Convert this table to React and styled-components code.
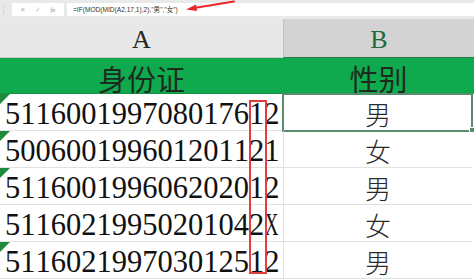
import React from "react";
import styled, { createGlobalStyle } from "styled-components";

const GlobalStyle = createGlobalStyle`
  html, body {
    margin: 0;
    padding: 0;
    background: #ffffff;
  }
  body {
    width: 474px;
    height: 279px;
    overflow: hidden;
  }
`;

const rows = [
  { id: "511600199708017612", sex: "男", flag: true },
  { id: "500600199601201121", sex: "女", flag: true },
  { id: "511600199606202012", sex: "男", flag: true },
  { id: "51160219950201042X", sex: "女", flag: false },
  { id: "511602199703012512", sex: "男", flag: true },
];

const Page = styled.div`
  width: 474px;
  height: 279px;
  display: flex;
  flex-direction: column;
  position: relative;
  overflow: hidden;
`;

const FormulaBar = styled.div`
  height: 19px;
  box-sizing: border-box;
  padding: 3px 0 0 12px;
  background: #e9e9e9;
  display: flex;
  align-items: flex-start;
  gap: 3px;
  position: relative;
`;

const Grip = styled.span`
  position: absolute;
  left: 3px;
  top: 5px;
  width: 1px;
  height: 9px;
  border-left: 1px dotted #c4c4c4;
`;

const ToolBox = styled.div`
  width: 52px;
  height: 13px;
  background: #ffffff;
  display: flex;
  align-items: center;
  justify-content: space-around;
  padding: 0 4px;
  box-sizing: border-box;
  color: #b8b8b8;
  font-family: "Liberation Sans", sans-serif;
  font-size: 7px;
`;

const FxLabel = styled.span`
  font-family: "Liberation Serif", serif;
  font-style: italic;
  color: #8a8a8a;
  font-size: 7px;
`;

const FormulaInput = styled.div`
  flex: 1;
  height: 13px;
  background: #ffffff;
  padding-left: 6px;
  font-family: "Liberation Sans", "Noto Sans CJK SC", sans-serif;
  font-size: 6.6px;
  line-height: 13px;
  color: #333333;
  white-space: nowrap;
`;

const Arrow = styled.svg`
  position: absolute;
  left: 184px;
  top: 0;
`;

const Sheet = styled.div`
  position: relative;
  display: grid;
  grid-template-columns: 283px 191px;
`;

const ColHeader = styled.div`
  height: 39px;
  box-sizing: border-box;
  background: ${(p) => (p.$active ? "#d3d3d3" : "#e8e8e8")};
  border-bottom: 1px solid ${(p) => (p.$active ? "#2d7a4c" : "#c9c9c9")};
  border-left: ${(p) => (p.$active ? "1px solid #c2c2c2" : "none")};
  display: flex;
  align-items: center;
  justify-content: center;
  padding-top: 3px;
  font-family: "Liberation Serif", serif;
  font-size: 26px;
  color: ${(p) => (p.$active ? "#1e6b3e" : "#262626")};
`;

const TitleCell = styled.div`
  height: 36px;
  box-sizing: border-box;
  background: #10aa4e;
  border-bottom: 1px solid #1b8e45;
  display: flex;
  align-items: center;
  justify-content: center;
  padding-top: 4px;
  font-family: "Noto Sans CJK SC", sans-serif;
  font-size: 29px;
  line-height: 32px;
  color: #1c2a1f;
`;

const IdCell = styled.div`
  position: relative;
  height: 37px;
  box-sizing: border-box;
  border-bottom: 1px solid #e1e1e1;
  padding: 4px 0 0 5px;
  display: flex;
  font-family: "Liberation Serif", serif;
  font-size: 30.5px;
  line-height: 33px;
  color: #111111;
  white-space: nowrap;
`;

/* every character of an ID gets the same slot, like a fixed-pitch sheet font */
const IdChar = styled.span`
  width: 15.25px;
  display: flex;
  justify-content: center;
  ${(p) => p.$narrow && "transform: scaleX(0.62);"}
`;

const TextFlag = styled.span`
  position: absolute;
  left: 0;
  top: 0;
  width: 0;
  height: 0;
  border-top: 10px solid #1f8a3c;
  border-right: 10px solid transparent;
`;

const SexCell = styled.div`
  position: relative;
  height: 37px;
  box-sizing: border-box;
  border-bottom: 1px solid #e1e1e1;
  border-left: 1px solid #e1e1e1;
  margin-right: 2px;
  display: flex;
  align-items: center;
  justify-content: center;
  padding-top: 3px;
  font-family: "Noto Sans CJK SC", sans-serif;
  font-size: 26px;
  font-weight: 300;
  color: #2a2a2a;
  outline: ${(p) => (p.$selected ? "2px solid #5b8b6d" : "none")};
  outline-offset: -1px;
`;

const FillHandle = styled.span`
  position: absolute;
  right: -3px;
  bottom: -3px;
  width: 4px;
  height: 4px;
  background: #5b8b6d;
  border: 1px solid #ffffff;
`;

const DigitMark = styled.div`
  position: absolute;
  left: 249px;
  top: 81px;
  width: 18px;
  height: 174px;
  box-sizing: border-box;
  border: 2px solid #e33d3d;
`;

export default function App() {
  return (
    <Page>
      <GlobalStyle />
      <FormulaBar>
        <Grip />
        <ToolBox>
          <span>✕</span>
          <span>✓</span>
          <FxLabel>fx</FxLabel>
        </ToolBox>
        <FormulaInput>=IF(MOD(MID(A2,17,1),2),"男","女")</FormulaInput>
        <Arrow width="52" height="14" viewBox="0 0 52 14">
          <path d="M50 1.5 L10 8" stroke="#e8262b" strokeWidth="2" strokeLinecap="round" fill="none" />
          <path d="M2 9.5 L12 4.5 L13 11 Z" fill="#e8262b" />
        </Arrow>
      </FormulaBar>
      <Sheet>
        <ColHeader>A</ColHeader>
        <ColHeader $active>B</ColHeader>
        <TitleCell>身份证</TitleCell>
        <TitleCell>性别</TitleCell>
        {rows.map((r, i) => (
          <React.Fragment key={r.id}>
            <IdCell>
              {r.flag && <TextFlag />}
              {r.id.split("").map((c, k) => (
                <IdChar key={k} $narrow={c === "X"}>
                  {c}
                </IdChar>
              ))}
            </IdCell>
            <SexCell $selected={i === 0}>
              {r.sex}
              {i === 0 && <FillHandle />}
            </SexCell>
          </React.Fragment>
        ))}
        <DigitMark />
      </Sheet>
    </Page>
  );
}
